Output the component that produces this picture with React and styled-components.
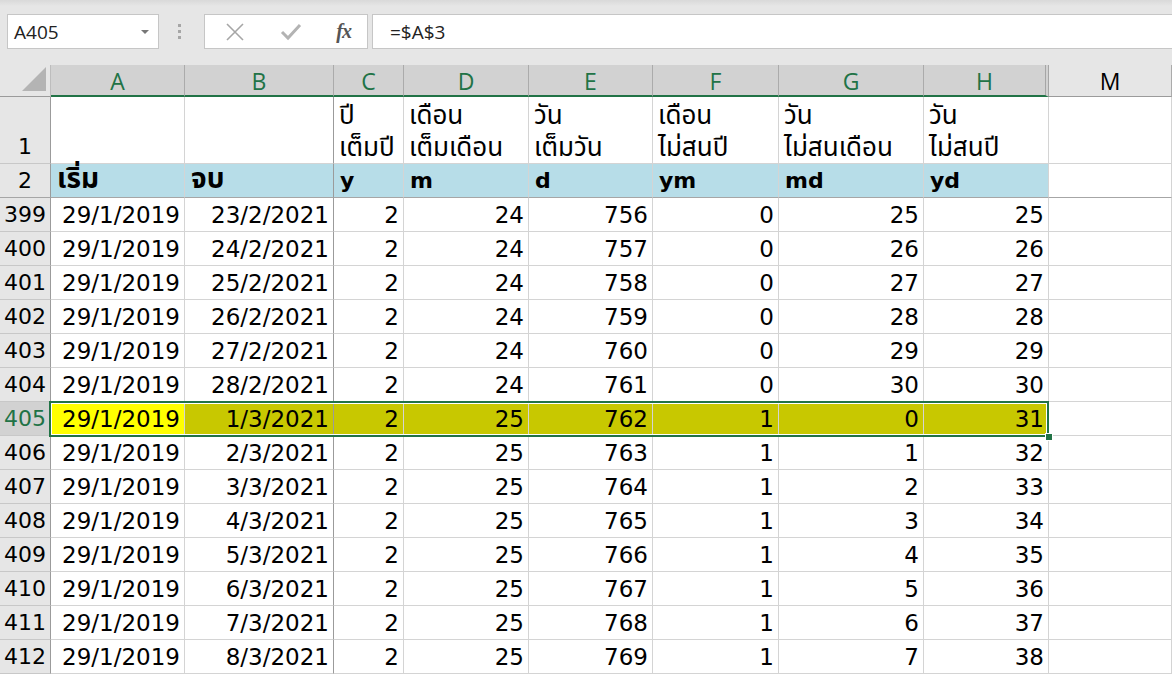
import React from 'react'
import styled, { createGlobalStyle } from 'styled-components'

const GREEN = '#217346'
const GRID = '#d4d4d4'
const CELL_FONT = '"DejaVu Sans", Tahoma, "Noto Sans Thai", "Noto Sans", sans-serif'

const GlobalStyle = createGlobalStyle`
  html, body { margin: 0; padding: 0; background: #fff; }
  body { font-family: ${CELL_FONT}; overflow: hidden; }
  * { box-sizing: border-box; }
`

const columns = [
  { key: 'A', width: 134 },
  { key: 'B', width: 149, pageBreak: true },
  { key: 'C', width: 70 },
  { key: 'D', width: 125 },
  { key: 'E', width: 124 },
  { key: 'F', width: 126 },
  { key: 'G', width: 145 },
  { key: 'H', width: 125, hidden: true },
]

const titles = [
  ['', ''],
  ['', ''],
  ['ปี', 'เต็มปี'],
  ['เดือน', 'เต็มเดือน'],
  ['วัน', 'เต็มวัน'],
  ['เดือน', 'ไม่สนปี'],
  ['วัน', 'ไม่สนเดือน'],
  ['วัน', 'ไม่สนปี'],
]

const labels = [
  { text: 'เริ่ม', thai: true },
  { text: 'จบ', thai: true },
  { text: 'y' },
  { text: 'm' },
  { text: 'd' },
  { text: 'ym' },
  { text: 'md' },
  { text: 'yd' },
]

const rows = Array.from({ length: 14 }, (_, i) => {
  const n = 399 + i
  const feb = 23 + i
  const end = feb <= 28 ? `${feb}/2/2021` : `${feb - 28}/3/2021`
  const after = feb > 28
  return {
    n,
    values: [
      '29/1/2019',
      end,
      2,
      after ? 25 : 24,
      756 + i,
      after ? 1 : 0,
      after ? feb - 29 : feb + 2,
      25 + i,
    ],
  }
})

const ACTIVE_ROW = 405

export default function App() {
  return (
    <Window>
      <GlobalStyle />
      <FormulaBar>
        <NameBox>
          <span>A405</span>
          <Caret />
        </NameBox>
        <Grip>
          <i /><i /><i />
        </Grip>
        <ButtonsBox>
          <svg width="22" height="22" viewBox="0 0 22 22">
            <path d="M3 3 L19 19 M19 3 L3 19" stroke="#a6a6a6" strokeWidth="1.6" fill="none" />
          </svg>
          <svg width="24" height="22" viewBox="0 0 24 22">
            <path d="M3 11 L9 17 L21 4" stroke="#b3b3b3" strokeWidth="3" fill="none" />
          </svg>
          <Fx>fx</Fx>
        </ButtonsBox>
        <FormulaInput>=$A$3</FormulaInput>
      </FormulaBar>

      <Sheet>
        <Corner>
          <svg width="26" height="26" viewBox="0 0 26 26">
            <polygon points="25,1 25,25 1,25" fill="#b4b4b4" />
          </svg>
        </Corner>
        {columns.map(c => (
          <ColHead key={c.key} $active $double={c.hidden}>{c.key}</ColHead>
        ))}
        <ColHead>M</ColHead>

        <RowHead>1</RowHead>
        {titles.map((t, i) => (
          <TitleCell key={i} $pageBreak={columns[i].pageBreak}>
            <span>{t[0]}</span>
            <span>{t[1]}</span>
          </TitleCell>
        ))}
        <Cell />

        <RowHead $breakBottom>2</RowHead>
        {labels.map((l, i) => (
          <LabelCell key={i} $thai={l.thai} $pageBreak={columns[i].pageBreak}>{l.text}</LabelCell>
        ))}
        <Cell $breakBottom />

        {rows.map(r => {
          const active = r.n === ACTIVE_ROW
          return (
            <React.Fragment key={r.n}>
              <RowHead $active={active}>{r.n}</RowHead>
              {r.values.map((v, i) => (
                <Cell
                  key={i}
                  $pageBreak={columns[i].pageBreak}
                  $fill={active ? (i === 0 ? '#ffff00' : '#c8c800') : null}
                >
                  {v}
                </Cell>
              ))}
              <Cell />
            </React.Fragment>
          )
        })}

        <Selection>
          <FillHandle />
        </Selection>
      </Sheet>
    </Window>
  )
}

const Window = styled.div`
  width: 100%;
  height: 678px;
  overflow: hidden;
  background: #fff;
`

const FormulaBar = styled.div`
  display: flex;
  align-items: center;
  height: 65px;
  padding: 0 0 2px 7px;
  background: linear-gradient(#d9d9d9 0, #e6e6e6 6px, #e6e6e6 100%);
`

const NameBox = styled.div`
  display: flex;
  align-items: center;
  justify-content: space-between;
  width: 152px;
  height: 35px;
  padding: 0 9px 0 6px;
  background: #fff;
  border: 1px solid #c6c6c6;
  font-family: "Open Sans", "Liberation Sans", sans-serif;
  font-size: 19px;
  color: #222;
`

const Caret = styled.span`
  width: 0;
  height: 0;
  border-left: 4px solid transparent;
  border-right: 4px solid transparent;
  border-top: 4px solid #777;
`

const Grip = styled.div`
  display: flex;
  flex-direction: column;
  gap: 3px;
  margin: 0 23px 0 19px;
  i {
    display: block;
    width: 3px;
    height: 3px;
    background: #a6a6a6;
  }
`

const ButtonsBox = styled.div`
  display: flex;
  align-items: center;
  justify-content: space-between;
  width: 164px;
  height: 35px;
  padding: 0 16px 0 19px;
  background: #fff;
  border: 1px solid #c6c6c6;
  margin-right: 4px;
`

const Fx = styled.span`
  font-family: "Liberation Serif", "DejaVu Serif", serif;
  font-style: italic;
  font-weight: bold;
  font-size: 20px;
  color: #555;
  letter-spacing: -1px;
`

const FormulaInput = styled.div`
  flex: 1;
  display: flex;
  align-items: center;
  height: 35px;
  padding-left: 17px;
  background: #fff;
  border: 1px solid #c6c6c6;
  border-right: none;
  font-family: "Open Sans", "Liberation Sans", sans-serif;
  font-size: 19px;
  color: #222;
`

const Sheet = styled.div`
  position: relative;
  display: grid;
  grid-template-columns: 51px ${columns.map(c => c.width + 'px').join(' ')} 1fr;
  grid-template-rows: 32px 67px 34px repeat(14, 34px);
`

const Corner = styled.div`
  display: flex;
  align-items: flex-end;
  justify-content: flex-end;
  padding: 0 3px 4px 0;
  background: #e6e6e6;
  border-right: 1px solid #bdbdbd;
  border-bottom: 1px solid #9b9b9b;
`

const ColHead = styled.div`
  display: flex;
  align-items: center;
  justify-content: center;
  background: ${p => (p.$active ? '#d2d2d2' : '#e6e6e6')};
  color: ${p => (p.$active ? GREEN : '#000')};
  border-right: ${p => (p.$double ? '4px double #a6a6a6' : '1px solid #ababab')};
  border-bottom: ${p => (p.$active ? `2px solid ${GREEN}` : '1px solid #9b9b9b')};
  padding-top: ${p => (p.$active ? '2px' : '1px')};
  font-family: "Open Sans", "Liberation Sans", sans-serif;
  font-size: 23px;
`

const RowHead = styled.div`
  display: flex;
  align-items: flex-end;
  justify-content: center;
  padding-bottom: 2px;
  background: ${p => (p.$active ? '#d2d2d2' : '#e6e6e6')};
  color: ${p => (p.$active ? GREEN : '#000')};
  border-right: 1px solid #9b9b9b;
  border-bottom: 1px solid ${p => (p.$breakBottom ? '#a6a6a6' : '#c8c8c8')};
  font-size: 22px;
  line-height: 28px;
`

const Cell = styled.div`
  display: flex;
  align-items: flex-end;
  justify-content: flex-end;
  padding: 0 4px 2px 4px;
  background: ${p => p.$fill || '#fff'};
  border-right: 1px solid ${p => (p.$pageBreak ? '#9b9b9b' : GRID)};
  border-bottom: 1px solid ${p => (p.$breakBottom ? '#a6a6a6' : GRID)};
  font-size: 23px;
  line-height: 28px;
  color: #000;
  white-space: nowrap;
`

const TitleCell = styled(Cell)`
  flex-direction: column;
  align-items: flex-start;
  justify-content: flex-end;
  padding: 0 2px 0 5px;
  font-size: 26px;
  line-height: 32px;
`

const LabelCell = styled(Cell)`
  justify-content: flex-start;
  padding-left: 6px;
  background: #b7dde8;
  border-bottom-color: #a6a6a6;
  font-weight: bold;
  font-size: ${p => (p.$thai ? '28px' : '22px')};
  line-height: ${p => (p.$thai ? '32px' : '28px')};
`

const Selection = styled.div`
  position: absolute;
  left: 49px;
  top: 336px;
  width: 1000px;
  height: 36px;
  border: 2px solid ${GREEN};
  box-shadow: inset 0 0 0 1px #fff;
  pointer-events: none;
`

const FillHandle = styled.div`
  position: absolute;
  right: -6px;
  bottom: -6px;
  width: 8px;
  height: 8px;
  background: ${GREEN};
  border: 1px solid #fff;
`
